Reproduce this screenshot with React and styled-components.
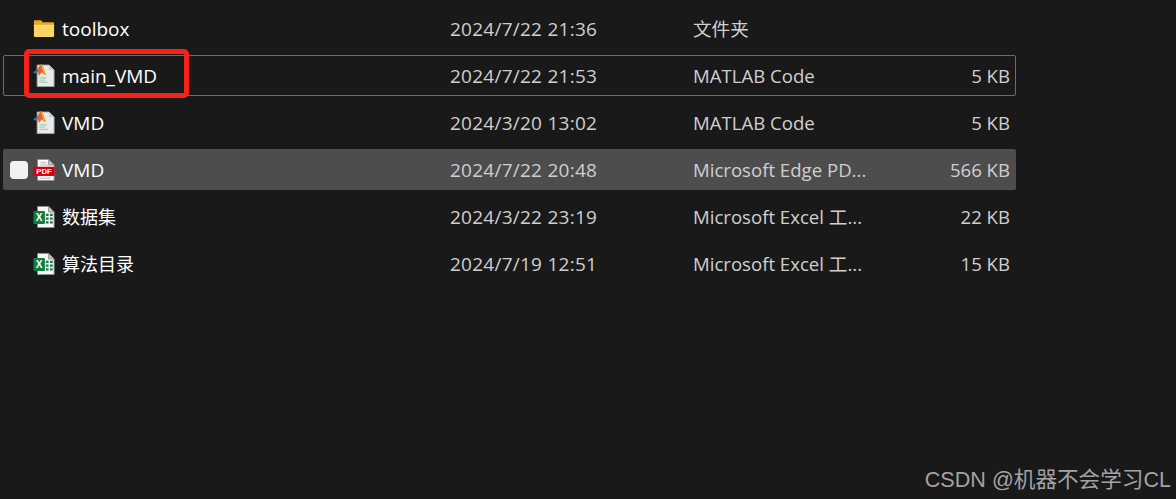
import React from "react";
import styled, { createGlobalStyle } from "styled-components";

const GlobalStyle = createGlobalStyle`
  html, body {
    margin: 0;
    padding: 0;
    background: #191919;
  }
`;

function FolderIcon() {
  return (
    <svg width="24" height="24" viewBox="0 0 24 24">
      <path d="M1 3.500a1 1 0 0 1 1-1h6.500l2.400 2H22a1 1 0 0 1 1 1V9H1z" fill="#e8a820" />
      <path d="M1 7.500h22v12.200a1 1 0 0 1-1 1H2a1 1 0 0 1-1-1z" fill="#fbd666" />
      <path d="M1 7.500h22v1.200H1z" fill="#fde28a" />
    </svg>
  );
}

function PageBase() {
  return (
    <>
      <path d="M5 0.500h12L23 6.500v17H5z" fill="#f7f7f7" stroke="#8f8f8f" strokeWidth="1" />
      <path d="M17 0.500V6.500H23z" fill="#c9c9c9" stroke="#8f8f8f" strokeWidth="1" />
    </>
  );
}

function MatlabIcon() {
  return (
    <svg width="24" height="26" viewBox="0 0 24 26">
      <path d="M4.500 1h13L23 6.500V24.500H4.500z" fill="#e6ebe9" stroke="#9aa3a6" strokeWidth="1" />
      <path d="M17.500 1V6.500H23z" fill="#c4cbcd" />
      <path d="M7 15h8M7 17.500h6M7 20h9" stroke="#a6cdb1" strokeWidth="1.200" />
      <path d="M0 9 4.500 5.500 6.500 7.500 2.500 10.500z" fill="#2f6fb5" />
      <path d="M4.500 6 8.500 0 12.500 12 9.500 9 6.500 13z" fill="#e2622a" />
      <path d="M8.500 0 10.500 1 14.500 12 12.500 12z" fill="#f3a33b" />
    </svg>
  );
}

function PdfIcon() {
  return (
    <svg width="24" height="24" viewBox="0 0 24 24">
      <PageBase />
      <path d="M8 4h7M8 6.500h11M8 21h11" stroke="#b5b5b5" strokeWidth="1" />
      <rect x="0.500" y="8.500" width="23" height="10" fill="#d40012" />
      <text x="12" y="16.800" textAnchor="middle" fontFamily="Liberation Sans, sans-serif" fontSize="8.500" fontWeight="700" fill="#fff">PDF</text>
    </svg>
  );
}

function ExcelIcon() {
  return (
    <svg width="24" height="24" viewBox="0 0 24 24">
      <PageBase />
      <path d="M14 8.500h3v2.500h-3zM18.500 8.500h3v2.500h-3zM14 12.500h3v2.500h-3zM18.500 12.500h3v2.500h-3zM14 16.500h3v2.500h-3zM18.500 16.500h3v2.500h-3z" fill="#1d7a45" />
      <rect x="0.500" y="5.500" width="12.500" height="14" rx="1" fill="#107c41" />
      <text x="6.700" y="16.500" textAnchor="middle" fontFamily="Liberation Sans, sans-serif" fontSize="11" fontWeight="700" fill="#fff">X</text>
    </svg>
  );
}

const icons = {
  folder: FolderIcon,
  matlab: MatlabIcon,
  pdf: PdfIcon,
  excel: ExcelIcon,
};

const files = [
  { name: "toolbox", date: "2024/7/22 21:36", type: "文件夹", size: "", icon: "folder" },
  { name: "main_VMD", date: "2024/7/22 21:53", type: "MATLAB Code", size: "5 KB", icon: "matlab", focused: true },
  { name: "VMD", date: "2024/3/20 13:02", type: "MATLAB Code", size: "5 KB", icon: "matlab" },
  { name: "VMD", date: "2024/7/22 20:48", type: "Microsoft Edge PD...", size: "566 KB", icon: "pdf", hovered: true },
  { name: "数据集", date: "2024/3/22 23:19", type: "Microsoft Excel 工...", size: "22 KB", icon: "excel", cjk: true },
  { name: "算法目录", date: "2024/7/19 12:51", type: "Microsoft Excel 工...", size: "15 KB", icon: "excel", cjk: true },
];

export default function App() {
  return (
    <>
      <GlobalStyle />
      <Page>
        <List>
          {files.map((file) => {
            const Icon = icons[file.icon];
            return (
              <Row key={file.name + file.date} $focused={file.focused} $hovered={file.hovered}>
                <Check $visible={file.hovered} />
                <IconSlot>
                  <Icon />
                </IconSlot>
                <Name $cjk={file.cjk}>{file.name}</Name>
                <DateCell>{file.date}</DateCell>
                <Type>{file.type}</Type>
                <Size>{file.size}</Size>
                {file.focused && <Annotation />}
              </Row>
            );
          })}
        </List>
        <Watermark>CSDN @机器不会学习CL</Watermark>
      </Page>
    </>
  );
}

const Page = styled.div`
  position: relative;
  width: 1176px;
  height: 499px;
  box-sizing: border-box;
  padding: 8px 0 0 3px;
  background: #191919;
  overflow: hidden;
  font-family: "Open Sans", "Noto Sans CJK SC", sans-serif;
  font-size: 18px;
  line-height: 24px;
  color: #fff;
`;

const List = styled.div`
  display: flex;
  flex-direction: column;
  gap: 6px;
  width: 1013px;
`;

const Row = styled.div`
  position: relative;
  display: grid;
  grid-template-columns: 27px 24px 395px 243px 1fr auto;
  align-items: center;
  height: 41px;
  box-sizing: border-box;
  padding-right: 5px;
  border-radius: 2px;
  border: 1px solid ${(p) => (p.$focused ? "#6b6b6b" : "transparent")};
  background: ${(p) => (p.$hovered ? "#4d4d4d" : "transparent")};
`;

const Check = styled.span`
  justify-self: start;
  width: 18px;
  height: 18px;
  margin-left: 6px;
  border-radius: 4px;
  background: ${(p) => (p.$visible ? "#f2f2f2" : "transparent")};
`;

const IconSlot = styled.span`
  display: flex;
  grid-column: 2;
  margin-left: 2px;
`;

const Name = styled.span`
  grid-column: 3;
  padding-left: 7px;
  font-size: ${(p) => (p.$cjk ? "18px" : "19px")};
  white-space: nowrap;
`;

const DateCell = styled.span`
  grid-column: 4;
  font-size: 19px;
  letter-spacing: 0.25px;
  color: #cfcfcf;
  white-space: nowrap;
`;

const Type = styled.span`
  grid-column: 5;
  font-size: 18.6px;
  color: #cfcfcf;
  white-space: nowrap;
`;

const Size = styled.span`
  grid-column: 6;
  font-size: 18.6px;
  color: #cfcfcf;
  white-space: nowrap;
`;

const Annotation = styled.span`
  position: absolute;
  left: 20px;
  top: -7px;
  width: 165px;
  height: 49px;
  box-sizing: border-box;
  border: 5px solid #f5211a;
  border-radius: 5px;
`;

const Watermark = styled.div`
  position: absolute;
  right: 5px;
  bottom: 7px;
  font-family: "Liberation Sans", "Noto Sans CJK SC", sans-serif;
  font-size: 21.6px;
  color: #a3a3a3;
  white-space: nowrap;
`;
